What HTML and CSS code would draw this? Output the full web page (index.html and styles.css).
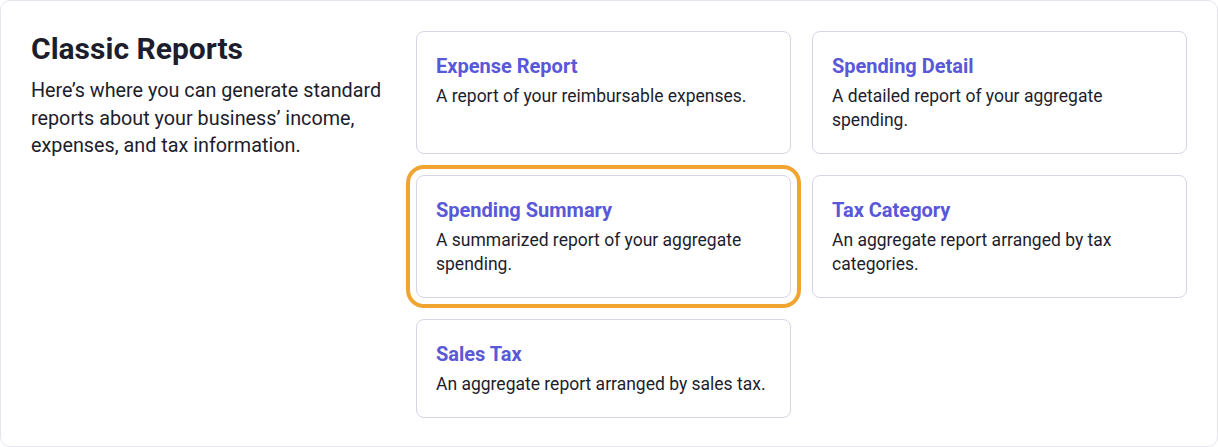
FILE: index.html
```html
<!DOCTYPE html>
<html lang="en">
<head>
    <meta charset="UTF-8">
    <title>Classic Reports</title>
    <link rel="stylesheet" href="styles.css">
</head>
<body>
<div id="panel">
    <div class="intro">
        <h1>Classic Reports</h1>
        <p>Here’s where you can generate standard reports about your business’ income, expenses, and tax information.</p>
    </div>
    <div class="reports">
        <div class="report">
            <div class="title">Expense Report</div>
            <p>A report of your reimbursable expenses.</p>
        </div>
        <div class="report">
            <div class="title">Spending Detail</div>
            <p>A detailed report of your aggregate spending.</p>
        </div>
        <div class="report focused">
            <div class="title">Spending Summary</div>
            <p>A summarized report of your aggregate spending.</p>
        </div>
        <div class="report">
            <div class="title">Tax Category</div>
            <p>An aggregate report arranged by tax categories.</p>
        </div>
        <div class="report">
            <div class="title">Sales Tax</div>
            <p>An aggregate report arranged by sales tax.</p>
        </div>
    </div>
</div>
</body>
</html>
```

FILE: styles.css
```css
html, body {
    margin: 0;
    background-color: white;
}
body {
    font-family: Roboto, "Liberation Sans", sans-serif;
    color: #1d1d2c;
}
#panel {
    box-sizing: border-box;
    height: 447px;
    border: 1px solid #e6e5ee;
    border-radius: 10px;
    padding: 30px;
    display: grid;
    grid-template-columns: 364px 1fr;
    column-gap: 21px;
}
.intro h1 {
    margin: 0;
    font-size: 30px;
    line-height: 36px;
    font-weight: 700;
}
.intro p {
    margin: 10px 0 0;
    font-size: 19.8px;
    line-height: 27.5px;
}
.reports {
    display: grid;
    grid-template-columns: 1fr 1fr;
    gap: 21px;
    align-content: start;
}
.report {
    border: 1px solid #d6d4e6;
    border-radius: 8px;
    padding: 20px 19px 21px;
}
.report.focused {
    outline: 4px solid #f1a531;
    outline-offset: 6px;
}
.report .title {
    color: #5858d8;
    font-size: 20px;
    line-height: 28px;
    font-weight: 700;
}
.report p {
    margin: 4px 0 0;
    font-size: 17.5px;
    line-height: 24px;
}
```
